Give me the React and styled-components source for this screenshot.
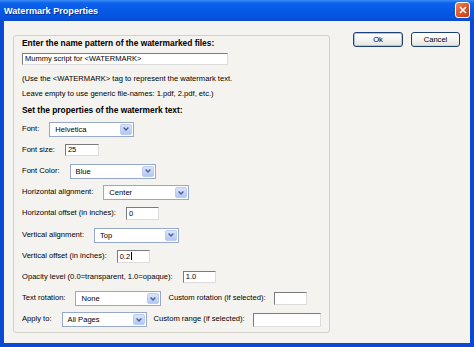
import React from 'react'
import styled, { createGlobalStyle } from 'styled-components'

const GlobalStyle = createGlobalStyle`
  html, body {
    margin: 0;
    padding: 0;
    overflow: hidden;
  }
  body {
    font-family: "Liberation Sans", Arial, sans-serif;
    color: #000;
  }
`

const Window = styled.div`
  width: 474px;
  height: 347px;
  display: flex;
  flex-direction: column;
  background: #0a49d2;
`

const TitleBar = styled.div`
  height: 21px;
  flex: none;
  display: flex;
  align-items: center;
  justify-content: space-between;
  padding: 0 4px 0 4px;
  background: linear-gradient(to bottom, #3d8ef7 0%, #0e63ec 14%, #0659e6 45%, #0553dd 85%, #0a4ac9 100%);
`

const Title = styled.span`
  color: #fff;
  font-weight: 700;
  font-size: 9.1px;
  text-shadow: 1px 1px 0 #0a2f8c;
`

const CloseButton = styled.div`
  width: 13px;
  height: 14px;
  margin-top: -1px;
  border: 1px solid #fff;
  border-radius: 3px;
  background: linear-gradient(135deg, #f08a64 0%, #de5a31 45%, #c23d15 100%);
  display: flex;
  align-items: center;
  justify-content: center;
`

const Frame = styled.div`
  flex: 1;
  display: flex;
  padding: 0 4px 4px 4px;
`

const Body = styled.div`
  flex: 1;
  display: flex;
  align-items: flex-start;
  padding: 11px 10px 0 9px;
  background: #f4f3ef;
`

const Group = styled.div`
  width: 317px;
  height: 298px;
  box-sizing: border-box;
  margin-top: 3px;
  padding: 0 8px;
  border: 1px solid #d3d1c7;
  border-radius: 3px;
  display: flex;
  flex-direction: column;
`

const Heading = styled.div`
  font-size: 8.4px;
  font-weight: 700;
  line-height: 14px;
  height: 14px;
  margin-top: ${p => p.$top || 0}px;
  margin-bottom: ${p => p.$bottom || 0}px;
  white-space: nowrap;
`

const Note = styled.div`
  font-size: 7.6px;
  line-height: 14px;
  height: 14px;
  margin-top: ${p => p.$top || 0}px;
  white-space: nowrap;
`

const TextBox = styled.div`
  width: ${p => p.$w}px;
  height: ${p => p.$h || 13}px;
  box-sizing: border-box;
  margin-top: ${p => p.$top || 0}px;
  flex: none;
  background: #fff;
  border: 1px solid;
  border-color: #7b7b7b #dcdcdc #dcdcdc #7b7b7b;
  font-size: 7.5px;
  line-height: ${p => (p.$h || 13) - 2}px;
  padding-left: 2px;
  white-space: nowrap;
  display: flex;
  align-items: center;
`

const Caret = styled.span`
  width: 1px;
  height: 8px;
  margin-left: 1px;
  background: #000;
`

const Row = styled.div`
  height: 21.2px;
  display: flex;
  align-items: center;
  gap: 10px;
  flex: none;
`

const Label = styled.span`
  font-size: 7.6px;
  white-space: nowrap;
  margin-bottom: 2px;
`

const Side = styled.div`
  display: flex;
  align-items: center;
  gap: 8px;
  margin-left: -3px;
`

const Combo = styled.div`
  width: ${p => p.$w || 86}px;
  height: 15px;
  box-sizing: border-box;
  flex: none;
  display: flex;
  align-items: center;
  justify-content: space-between;
  background: #fff;
  border: 1px solid #97a9c9;
  padding: 0 1px 0 5px;
  font-size: 7.6px;
`

const ComboButton = styled.div`
  width: 12px;
  height: 11px;
  border-radius: 2px;
  border: 1px solid #bcccf2;
  box-sizing: border-box;
  background: linear-gradient(to bottom, #d9e4fc 0%, #c3d3f8 60%, #b3c7f4 100%);
  display: flex;
  align-items: center;
  justify-content: center;
`

const Buttons = styled.div`
  margin-left: auto;
  display: flex;
  gap: 8px;
`

const Button = styled.div`
  width: ${p => p.$w || 50}px;
  height: 15px;
  box-sizing: border-box;
  border: 1px solid #1c3f76;
  border-radius: 3px;
  background: linear-gradient(to bottom, #ffffff 0%, #f4f4f1 50%, #e4e3dc 100%);
  box-shadow: ${p => (p.$primary ? 'inset 0 0 0 1px #a9c5f1' : 'inset 0 -1px 0 #d6d4ca')};
  display: flex;
  align-items: center;
  justify-content: center;
  font-size: 7.6px;
`

function Chevron() {
  return (
    <svg width="6" height="4" viewBox="0 0 6 4">
      <path d="M0.6 0.6 L3 3 L5.4 0.6" fill="none" stroke="#4a5f8a" strokeWidth="1.4" />
    </svg>
  )
}

function Select({ value, w }) {
  return (
    <Combo $w={w}>
      <span>{value}</span>
      <ComboButton>
        <Chevron />
      </ComboButton>
    </Combo>
  )
}

export default function App() {
  return (
    <>
      <GlobalStyle />
      <Window>
        <TitleBar>
          <Title>Watermark Properties</Title>
          <CloseButton>
            <svg width="8" height="8" viewBox="0 0 8 8">
              <path d="M1 1 L7 7 M7 1 L1 7" stroke="#fff" strokeWidth="1.6" />
            </svg>
          </CloseButton>
        </TitleBar>
        <Frame>
          <Body>
            <Group>
              <Heading>Enter the name pattern of the watermarked files:</Heading>
              <TextBox $w={206} $h={12} $top={3}>Mummy script for &lt;WATERMARK&gt;</TextBox>
              <Note $top={7}>(Use the &lt;WATERMARK&gt; tag to represent the watermark text.</Note>
              <Note $top={1}>Leave empty to use generic file-names: 1.pdf, 2.pdf, etc.)</Note>
              <Heading $top={2} $bottom={1.5}>Set the properties of the watermerk text:</Heading>
              <Row>
                <Label>Font:</Label>
                <Select value="Helvetica" w={85} />
              </Row>
              <Row>
                <Label>Font size:</Label>
                <TextBox $w={34} $h={12}>25</TextBox>
              </Row>
              <Row>
                <Label>Font Color:</Label>
                <Select value="Blue" />
              </Row>
              <Row>
                <Label>Horizontal alignment:</Label>
                <Select value="Center" />
              </Row>
              <Row>
                <Label>Horizontal offset (in inches):</Label>
                <TextBox $w={33}>0</TextBox>
              </Row>
              <Row>
                <Label>Vertical alignment:</Label>
                <Select value="Top" w={85} />
              </Row>
              <Row>
                <Label>Vertical offset (in inches):</Label>
                <TextBox $w={33}>
                  0.2<Caret />
                </TextBox>
              </Row>
              <Row>
                <Label>Opacity level (0.0=transparent, 1.0=opaque):</Label>
                <TextBox $w={33} $h={12}>1.0</TextBox>
              </Row>
              <Row>
                <Label>Text rotation:</Label>
                <Select value="None" />
                <Side>
                  <Label>Custom rotation (if selected):</Label>
                  <TextBox $w={33} />
                </Side>
              </Row>
              <Row>
                <Label>Apply to:</Label>
                <Select value="All Pages" w={85} />
                <Side>
                  <Label>Custom range (if selected):</Label>
                  <TextBox $w={68} $h={14} />
                </Side>
              </Row>
            </Group>
            <Buttons>
              <Button $primary>Ok</Button>
              <Button $w={49}>Cancel</Button>
            </Buttons>
          </Body>
        </Frame>
      </Window>
    </>
  )
}
